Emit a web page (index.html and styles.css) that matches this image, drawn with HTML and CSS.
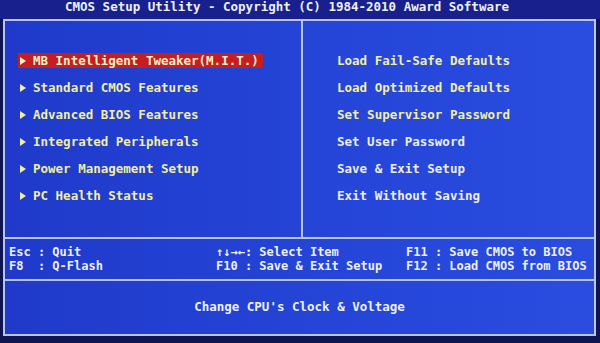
FILE: index.html
```html
<!DOCTYPE html>
<html lang="en">
<head>
  <meta charset="UTF-8" />
  <meta name="viewport" content="width=device-width, initial-scale=1" />
  <title>CMOS Setup Utility</title>
  <link rel="stylesheet" href="styles.css">
</head>
<body>

  <div class="title">CMOS Setup Utility - Copyright (C) 1984-2010 Award Software</div>

  <div class="frame">
    <div class="menu">
      <ul class="col col-left">
        <li class="item active"><span class="arrow"></span>MB Intelligent Tweaker(M.I.T.)</li>
        <li class="item"><span class="arrow"></span>Standard CMOS Features</li>
        <li class="item"><span class="arrow"></span>Advanced BIOS Features</li>
        <li class="item"><span class="arrow"></span>Integrated Peripherals</li>
        <li class="item"><span class="arrow"></span>Power Management Setup</li>
        <li class="item"><span class="arrow"></span>PC Health Status</li>
      </ul>
      <ul class="col col-right">
        <li class="item">Load Fail-Safe Defaults</li>
        <li class="item">Load Optimized Defaults</li>
        <li class="item">Set Supervisor Password</li>
        <li class="item pale">Set User Password</li>
        <li class="item pale">Save &amp; Exit Setup</li>
        <li class="item pale">Exit Without Saving</li>
      </ul>
    </div>

    <div class="keys">
      <span>Esc : Quit</span>
      <span>↑↓→←: Select Item</span>
      <span>F11 : Save CMOS to BIOS</span>
      <span>F8  : Q-Flash</span>
      <span>F10 : Save &amp; Exit Setup</span>
      <span>F12 : Load CMOS from BIOS</span>
    </div>

    <div class="help">Change CPU's Clock &amp; Voltage</div>
  </div>

</body>
</html>
```

FILE: styles.css
```css
* {
  margin: 0;
  padding: 0;
  box-sizing: border-box;
}

body {
  background-color: #0f1550;
  color: #eef0f6;
  font-family: "DejaVu Sans Mono", "Liberation Mono", monospace;
  font-weight: bold;
  font-size: 12.5px;
  height: 343px;
  overflow: hidden;
}

.title {
  height: 19px;
  line-height: 14px;
  background-color: #17208c;
  text-align: center;
  padding-right: 26px;
  white-space: pre;
}

.frame {
  margin: 0 4px 0 3px;
  background: linear-gradient(90deg, #1f3acb, #2546d8 60%, #2a4ddf);
  border: 2px solid #b8c4ee;
}

.menu {
  display: grid;
  grid-template-columns: 298px 1fr;
  height: 216px;
}

.col {
  list-style: none;
  display: flex;
  flex-direction: column;
  gap: 12px;
  padding-top: 32px;
}

.col-left {
  border-right: 2px solid #b8c4ee;
  padding-left: 13px;
}

.col-right {
  padding-left: 34px;
}

.item {
  height: 15px;
  line-height: 15px;
  color: #f2eea2;
  white-space: pre;
  align-self: flex-start;
}

.col-left .item {
  display: flex;
  align-items: center;
  gap: 7px;
  padding: 0 4px 0 2px;
}

.item.pale {
  color: #eceee6;
}

.item.active {
  background-color: #c41e20;
  color: #f8f0c8;
}

.arrow {
  width: 0;
  height: 0;
  border-left: 6px solid currentColor;
  border-top: 4px solid transparent;
  border-bottom: 4px solid transparent;
}

.keys {
  display: grid;
  grid-template-columns: 207px 190px auto;
  align-content: start;
  border-top: 2px solid #b8c4ee;
  height: 42px;
  padding: 6px 0 0 4px;
  font-size: 12px;
  line-height: 14px;
  white-space: pre;
}

.help {
  border-top: 2px solid #b8c4ee;
  height: 55px;
  padding-top: 18px;
  line-height: 15px;
  text-align: center;
}
```
